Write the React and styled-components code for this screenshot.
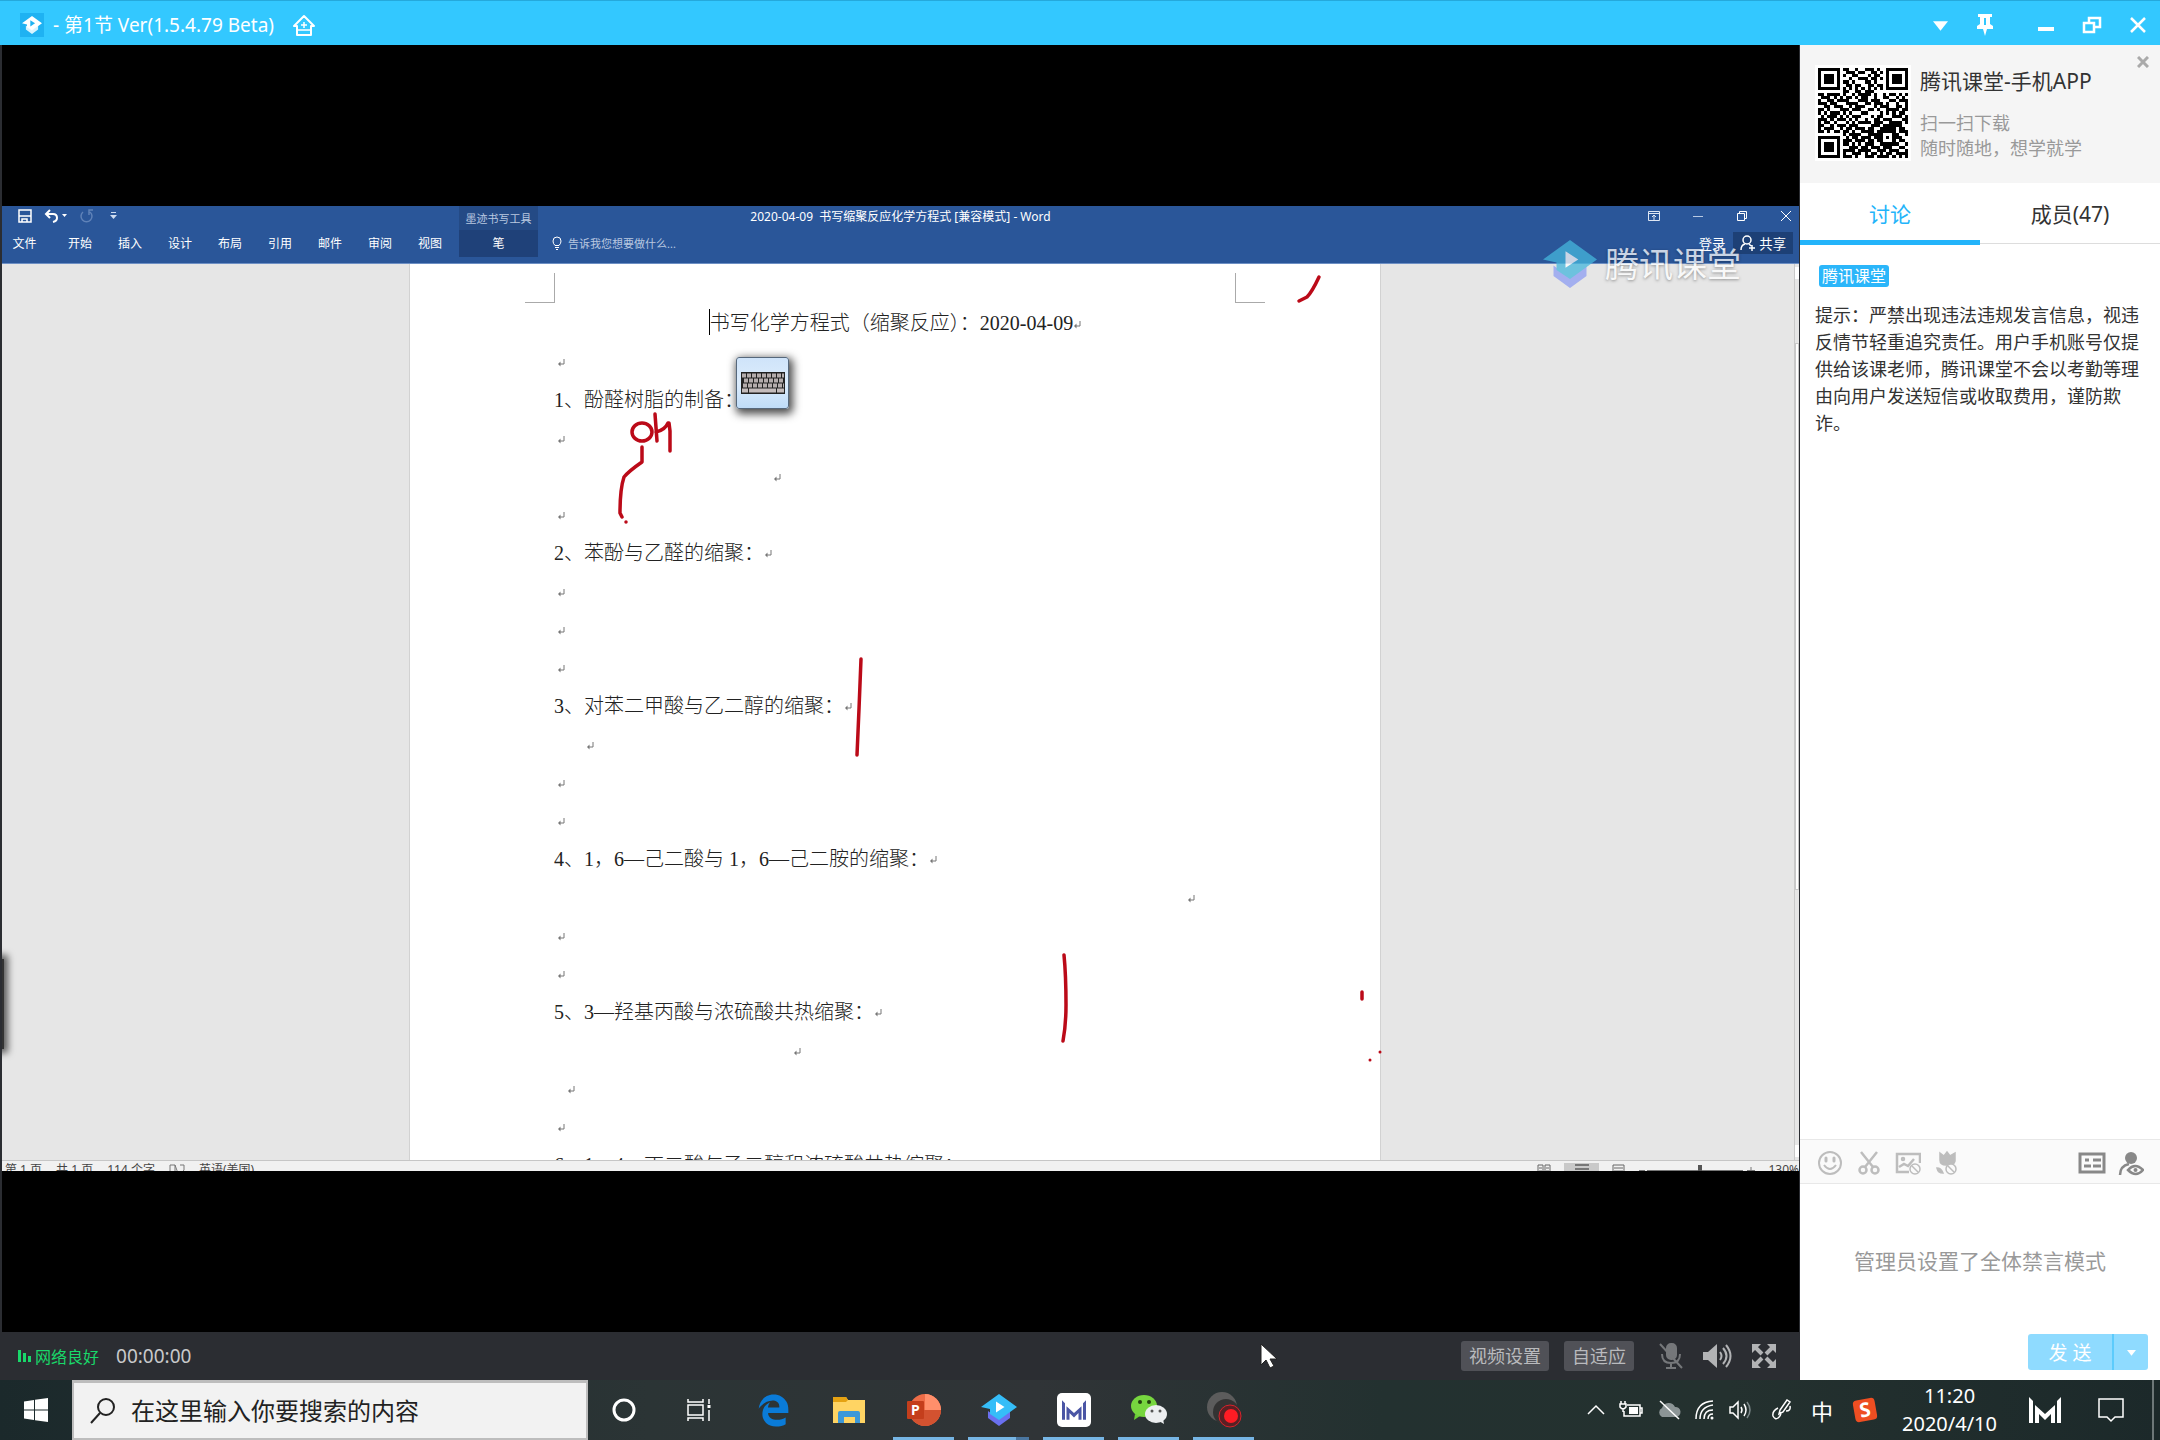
import React from 'react'
import styled, { createGlobalStyle } from 'styled-components';

const GlobalStyle = createGlobalStyle`
    *{
        box-sizing: border-box;
    }
    body{
        margin: 0;
        background: #000;
        font-family: "Noto Sans", "Noto Sans CJK SC", sans-serif;
    }
    button, input{
        font-family: inherit;
        color: inherit;
        border: 0;
        padding: 0;
        margin: 0;
        background: none;
    }
    p, h1, h2{
        margin: 0;
        font-weight: 400;
    }
    svg{
        display: block;
        flex: none;
    }
`;

const menus = ['开始', '插入', '设计', '布局', '引用', '邮件', '审阅', '视图'];

// gap: space between the text (or the margin) and the paragraph mark
const lines = [
    { gap: 3 },
    { text: '1、酚醛树脂的制备：', heading: true, noMark: true },
    { gap: 3 },
    { gap: 219 },
    { gap: 3 },
    { text: '2、苯酚与乙醛的缩聚：', heading: true },
    { gap: 3 },
    { gap: 3 },
    { gap: 3 },
    { text: '3、对苯二甲酸与乙二醇的缩聚：', heading: true },
    { gap: 32 },
    { gap: 3 },
    { gap: 3 },
    { text: '4、1，6—己二酸与 1，6—己二胺的缩聚：', heading: true },
    { gap: 633 },
    { gap: 3 },
    { gap: 3 },
    { text: '5、3—羟基丙酸与浓硫酸共热缩聚：', heading: true },
    { gap: 239 },
    { gap: 13 },
    { gap: 3 },
    { text: '6、1，4—丁二酸与乙二醇和浓硫酸共热缩聚：', heading: true },
];

const qrRows = [
    '11111110110010011101001111111',
    '10000010011101100110101000001',
    '10111010100110001011001011101',
    '10111010001001110110101011101',
    '10111010110100011010001011101',
    '10000010011011001101101000001',
    '11111110101010101010101111111',
    '00000000110011011100000000000',
    '11011110100101111010010110101',
    '01110101011010110010011001010',
    '10011011110001110111000110111',
    '11101100011110011011101001001',
    '00110111001011100010111001101',
    '11010001110111001101001111011',
    '10101110101000110000101010110',
    '01011101010111000101100011101',
    '11101011101010010011011100011',
    '10110100010101111011100111101',
    '11001011101110000111011111100',
    '10111001011011101100111110110',
    '11010110110100111101111110111',
    '00000000101111001111100011001',
    '11111110010110111011101011100',
    '10000010111011101101100010110',
    '10111010110101011100111111001',
    '10111010001110110111011100110',
    '10111010111101111001110111001',
    '10000010100111010110101101111',
    '11111110111010011101111010101',
];

const qrPath = qrRows
    .map((row, y) => [...row].map((c, x) => (c === '1' ? `M${x} ${y}h1v1h-1z` : '')).join(''))
    .join('');

function KeLogo({ size, top, bottom, play = '#fff' }) {
    return (
        <svg width={size} height={size} viewBox="0 0 36 36">
            <path d="M7 19v7l11 8 11-8v-7l-11 8z" fill={bottom} />
            <path d="M18 2 36 15 18 28l-3-2-6-4v-5L0 15z" fill={top} />
            <path d="M15 9.500v11l8.500-5.500z" fill={play} />
        </svg>
    )
}

function MLogo({ size, color }) {
    return (
        <svg width={size} height={size} viewBox="0 0 32 32" fill={color}>
            <path d="M0 3 4 7v22H0zM32 3l-4 4v22h4zM6 11l10 9 10-9v18h-4v-9l-6 6-6-6v9H6z" />
        </svg>
    )
}

function ParaMark() {
    return (
        <MarkStyled width="8" height="10" viewBox="0 0 8 10" fill="none" stroke="#777">
            <path d="M7 1v5H2" />
            <path d="M3.500 3.500 1 6l2.500 2.500z" fill="#777" stroke="none" />
        </MarkStyled>
    )
}

function Caret({ size = 14, color = '#fff' }) {
    return (
        <svg width={size} height={size} viewBox="0 0 14 14"><path d="M0 3h14L7 12z" fill={color} /></svg>
    )
}

function AppTitleBar() {
    return (
        <TitleBarStyled>
            <LogoBox><KeLogo size={20} top="#fff" bottom="#d8f4ff" play="#1fb2f2" /></LogoBox>
            <h1>- 第1节 Ver(1.5.4.79 Beta)</h1>
            <button aria-label="主页">
                <svg width="24" height="24" viewBox="0 0 24 24" fill="none" stroke="#fff" strokeWidth="2">
                    <path d="M12 3 2 13h3v9h14v-9h3z" strokeLinejoin="round" />
                    <path d="M5 17h14M12 9v6M9 12h6" strokeWidth="1.500" />
                </svg>
            </button>
            <WindowButtons>
                <button aria-label="菜单"><Caret size={15} /></button>
                <button aria-label="置顶">
                    <svg width="18" height="24" viewBox="0 0 18 24">
                        <path d="M2 1h14v3h-2v7l3 2v3h-6l-2 7-2-7H1v-3l3-2V4H2z" fill="#fff" />
                        <path d="M8 5h2v7H8z" fill="#33c8ff" />
                    </svg>
                </button>
                <button aria-label="最小化">
                    <svg width="16" height="20" viewBox="0 0 16 20"><path d="M0 12h16v4H0z" fill="#fff" /></svg>
                </button>
                <button aria-label="还原">
                    <svg width="20" height="20" viewBox="0 0 20 20" fill="none" stroke="#fff" strokeWidth="2.500">
                        <path d="M2 8h10v9H2zM7 7V3h11v9h-5" />
                    </svg>
                </button>
                <button aria-label="关闭">
                    <svg width="16" height="16" viewBox="0 0 16 16" stroke="#fff" strokeWidth="2.500"><path d="m1 1 14 14M15 1 1 15" /></svg>
                </button>
            </WindowButtons>
        </TitleBarStyled>
    )
}

function Ribbon() {
    return (
        <RibbonStyled>
            <QuickAccess>
                <button aria-label="保存">
                    <svg width="14" height="14" viewBox="0 0 14 14" fill="none" stroke="#fff" strokeWidth="1.500">
                        <path d="M1 1h12v12H1zM1 7h12M4 13v-3h5v3" />
                    </svg>
                </button>
                <button aria-label="撤消">
                    <svg width="24" height="14" viewBox="0 0 24 14" fill="none" stroke="#fff" strokeWidth="2">
                        <path d="M6 1 2 5l4 4M2 5h7q4 0 4 4 0 3-4 4" />
                        <path d="M18 5h5l-2.500 3z" fill="#fff" stroke="none" />
                    </svg>
                </button>
                <button aria-label="恢复">
                    <svg width="14" height="14" viewBox="0 0 14 14" fill="none" stroke="#5f82b8" strokeWidth="1.500">
                        <path d="M3 3a5.500 5.500 0 1 0 7 0M9 6V1h4" />
                    </svg>
                </button>
                <button aria-label="自定义">
                    <svg width="7" height="9" viewBox="0 0 7 9" fill="#cfdcf0"><path d="M1 1h5v1H1zM0 4h7L3.500 8z" /></svg>
                </button>
            </QuickAccess>
            <DocTitle>2020-04-09&nbsp; 书写缩聚反应化学方程式 [兼容模式] - Word</DocTitle>
            <ContextLabel>墨迹书写工具</ContextLabel>
            <WordButtons>
                <button aria-label="功能区选项">
                    <svg width="14" height="14" viewBox="0 0 14 14" fill="none" stroke="#dfe7f3"><path d="M1.500 2.500h11v9h-11zM2 4.500h10M7 11V6M5 8l2-2 2 2" /></svg>
                </button>
                <button aria-label="最小化 Word">
                    <svg width="14" height="14" viewBox="0 0 14 14" stroke="#b8c9e3"><path d="M2 7.500h10" /></svg>
                </button>
                <button aria-label="还原 Word">
                    <svg width="14" height="14" viewBox="0 0 14 14" fill="none" stroke="#fff"><path d="M2.500 4.500h7v7h-7zM4.500 4V2.500h7v7H10" /></svg>
                </button>
                <button aria-label="关闭 Word">
                    <svg width="14" height="14" viewBox="0 0 14 14" stroke="#fff"><path d="m2 2 10 10M12 2 2 12" /></svg>
                </button>
            </WordButtons>
            <Menus>
                <MenuButton $file>文件</MenuButton>
                {menus.map((m) => <MenuButton key={m}>{m}</MenuButton>)}
            </Menus>
            <ContextTab>笔</ContextTab>
            <TellMe>
                <svg width="10" height="14" viewBox="0 0 10 14" fill="none" stroke="#fff">
                    <path d="M3 9.500Q1 7.500 1 5a4 4 0 0 1 8 0q0 2.500-2 4.500zM3 11.500h4M4 13.500h2" />
                </svg>
                告诉我您想要做什么...
            </TellMe>
            <Account>
                <button>登录</button>
                <ShareButton>
                    <svg width="16" height="16" viewBox="0 0 16 16" fill="none" stroke="#fff" strokeWidth="1.500">
                        <circle cx="7" cy="5" r="4" />
                        <path d="M1 15q0-5 4-6M9 9l2 2M9 13h6M12 10v6" />
                    </svg>
                    共享
                </ShareButton>
            </Account>
        </RibbonStyled>
    )
}

function Keyboard() {
    return (
        <KeyboardStyled aria-label="屏幕键盘">
            <svg width="44" height="22" viewBox="0 0 44 22">
                <rect width="44" height="22" fill="#222" />
                <path
                    d="M1 3.500h42M3 8.500h40M2 13.500h41"
                    stroke="#b5adad"
                    strokeWidth="4"
                    strokeDasharray="4 1"
                />
                <path d="M1 18.500h6M8 18.500h27M36 18.500h7" stroke="#c4bcbc" strokeWidth="4" />
            </svg>
        </KeyboardStyled>
    )
}

function Ink() {
    return (
        <InkStyled width="972" height="896" viewBox="0 0 972 896">
            <ellipse cx="232" cy="168" rx="10" ry="9" />
            <path d="M245 150 247 177M246 168q9-2 12-9l1 0 1 8v20" />
            <path d="M232 183v15q-13 9-18 15-4 12-4 36l2 4M216 258v0" />
            <path d="m451 395-2 50-2 46" />
            <path d="M909 13q-7 15-12 20l-8 4" strokeLinejoin="round" />
            <path d="M654 691q2 20 2 50 0 20-3 36M952 728v7" />
            <path d="M960 796v0M970 788v0" strokeWidth="3" />
        </InkStyled>
    )
}

function WordWindow() {
    return (
        <WordStyled>
            <Ribbon />
            <DocArea>
                <Page>
                    <Corners><span /><span /></Corners>
                    <PageBody>
                        <DocLine $center>
                            <TextCursor />
                            <h2>书写化学方程式（缩聚反应）：2020-04-09</h2>
                            <ParaMark />
                        </DocLine>
                        {lines.map((l, i) => (
                            <DocLine key={i} $heading={l.heading} $gap={l.gap}>
                                {l.text && <p>{l.text}</p>}
                                {!l.noMark && <ParaMark />}
                            </DocLine>
                        ))}
                    </PageBody>
                    <Keyboard />
                    <Ink />
                </Page>
                <ScrollTrack><i /><b /><i /></ScrollTrack>
            </DocArea>
            <StatusBar>
                <span>第 1 页</span>
                <span>共 1 页</span>
                <span>114 个字</span>
                <svg width="16" height="14" viewBox="0 0 16 14" fill="none" stroke="#777"><path d="M1 2h5v11H1zM6 2l4 11M11 2h4v5l-4 5" /></svg>
                <span>英语(美国)</span>
                <ViewTools>
                    <svg width="14" height="14" viewBox="0 0 14 14" fill="none" stroke="#666"><path d="M1 2h5v11H1zM8 2h5v11H8zM2 5h3M2 8h3M9 5h3M9 8h3" /></svg>
                    <ViewActive>
                        <svg width="16" height="14" viewBox="0 0 16 14" stroke="#777" strokeWidth="2"><path d="M1 2h14M1 6h14M1 10h14" /></svg>
                    </ViewActive>
                    <svg width="14" height="14" viewBox="0 0 14 14" fill="none" stroke="#666"><path d="M1 2h11v11H1zM2 5h9M2 8h9" /></svg>
                    <svg width="116" height="14" viewBox="0 0 116 14" stroke="#777"><path d="M0 7.500h6M8 7.500h96M108 7.500h8M112 4v8" /><path d="M61 2v12" stroke="#555" strokeWidth="4" /></svg>
                    <span>130%</span>
                </ViewTools>
            </StatusBar>
            <EdgeHandle />
            <Watermark><KeLogo size={54} top="#45b6dc" bottom="#8d9df2" />腾讯课堂</Watermark>
        </WordStyled>
    )
}

function PlayerBar() {
    return (
        <PlayerBarStyled>
            <Network>
                <svg width="14" height="14" viewBox="0 0 14 14" fill="#19d86a"><path d="M0 1h3v12H0zM5 4h3v9H5zM10 7h3v6h-3z" /></svg>
                网络良好
            </Network>
            <time>00:00:00</time>
            <PlayerTools>
                <GreyButton>视频设置</GreyButton>
                <GreyButton>自适应</GreyButton>
                <button aria-label="麦克风">
                    <svg width="26" height="28" viewBox="0 0 26 28" fill="none" stroke="#75777a" strokeWidth="2">
                        <rect x="9" y="2" width="9" height="15" rx="4" fill="#75777a" />
                        <path d="M4 12q0 9 9 9t9-9M13 21v5M8 26h10M2 2l22 24" />
                    </svg>
                </button>
                <button aria-label="音量">
                    <svg width="30" height="26" viewBox="0 0 30 26" fill="none" stroke="#b2b3b5" strokeWidth="2">
                        <path d="M1 9h5l9-8v24l-9-8H1z" fill="#b2b3b5" stroke="none" />
                        <path d="M18 9q3 4 0 8M21 5q7 8 0 16M24 2q9 11 0 22" />
                    </svg>
                </button>
                <button aria-label="全屏">
                    <svg width="24" height="24" viewBox="0 0 24 24" fill="#b2b3b5" stroke="#b2b3b5" strokeWidth="4">
                        <path d="m3 3 7 7M21 3l-7 7M3 21l7-7M21 21l-7-7" />
                        <path d="M0 0h9L0 9zM24 0v9l-9-9zM0 24v-9l9 9zM24 24h-9l9-9z" stroke="none" />
                    </svg>
                </button>
            </PlayerTools>
        </PlayerBarStyled>
    )
}

function SidePanel() {
    return (
        <SidePanelStyled>
            <Promo>
                <QrBox>
                    <svg width="100%" viewBox="0 0 29 29" shapeRendering="crispEdges"><path d={qrPath} fill="#000" /></svg>
                </QrBox>
                <div>
                    <h2>腾讯课堂-手机APP</h2>
                    <p>扫一扫下载</p>
                    <p>随时随地，想学就学</p>
                </div>
                <PromoClose aria-label="关闭推广">
                    <svg width="12" height="12" viewBox="0 0 12 12" stroke="#aaa" strokeWidth="3"><path d="m1 1 10 10M11 1 1 11" /></svg>
                </PromoClose>
            </Promo>
            <Tabs>
                <TabButton $active>讨论</TabButton>
                <TabButton>成员(47)</TabButton>
            </Tabs>
            <Chat>
                <Badge>腾讯课堂</Badge>
                <p>提示：严禁出现违法违规发言信息，视违反情节轻重追究责任。用户手机账号仅提供给该课老师，腾讯课堂不会以考勤等理由向用户发送短信或收取费用，谨防欺诈。</p>
            </Chat>
            <ChatTools>
                <button aria-label="表情">
                    <svg width="26" height="26" viewBox="0 0 26 26" fill="none" stroke="#bdbdbd" strokeWidth="2">
                        <circle cx="13" cy="13" r="11" />
                        <path d="M7 15q6 8 12 0" />
                        <path d="M9 8v3M17 8v3" strokeWidth="3" strokeLinecap="round" />
                    </svg>
                </button>
                <button aria-label="截图">
                    <svg width="26" height="26" viewBox="0 0 26 26" fill="none" stroke="#bdbdbd" strokeWidth="2.500">
                        <circle cx="7" cy="20" r="3.500" />
                        <circle cx="19" cy="20" r="3.500" />
                        <path d="M5 2 17 17M21 2 9 17" />
                    </svg>
                </button>
                <button aria-label="图片">
                    <svg width="26" height="26" viewBox="0 0 26 26" fill="none" stroke="#bdbdbd" strokeWidth="2.500">
                        <path d="M14 22H2V4h23v9M4 17l5-3 4 2 6-7" />
                        <circle cx="8" cy="9" r="1" />
                        <circle cx="20" cy="19" r="5" strokeWidth="1.500" />
                        <path d="m17 16 6 6" strokeWidth="1.500" />
                    </svg>
                </button>
                <button aria-label="鲜花">
                    <svg width="26" height="26" viewBox="0 0 26 26" fill="none" stroke="#bdbdbd" strokeWidth="1.500">
                        <path d="m6 3 4 3 3-4 3 4 5-3v8q-1 4-6 4h-3q-6 0-6-5zM3 18q4 0 6 5-5 0-6-5z" fill="#bdbdbd" />
                        <circle cx="17" cy="19" r="5" fill="#fafafa" />
                        <path d="m14 16 6 6" />
                    </svg>
                </button>
                <ToolsRight>
                    <button aria-label="名片">
                        <svg width="28" height="22" viewBox="0 0 28 22" fill="none" stroke="#888" strokeWidth="3">
                            <path d="M2 2h24v18H2z" />
                            <path d="M7 8h4M6 14h7M15 8h8M15 14h8" />
                        </svg>
                    </button>
                    <button aria-label="只看老师">
                        <svg width="26" height="26" viewBox="0 0 26 26" fill="none" stroke="#888" strokeWidth="2.500">
                            <circle cx="13" cy="8" r="6" fill="#888" stroke="none" />
                            <path d="M2 25q0-9 9-11" />
                            <path d="M10 20q7-8 15 0-7 8-15 0z" />
                            <circle cx="17.500" cy="20" r="2" fill="#888" stroke="none" />
                        </svg>
                    </button>
                </ToolsRight>
            </ChatTools>
            <Composer>
                <p>管理员设置了全体禁言模式</p>
                <SendGroup>
                    <button>发 送</button>
                    <button aria-label="发送选项"><Caret size={9} /></button>
                </SendGroup>
            </Composer>
        </SidePanelStyled>
    )
}

function Taskbar() {
    return (
        <TaskbarStyled>
            <StartButton aria-label="开始菜单">
                <svg width="24" height="24" viewBox="0 0 24 24" fill="#fff"><path d="M0 3.500 10 2v9.500H0zM11 1.800 24 0v11.500H11zM0 12.500h10V22L0 20.500zM11 12.500h13V24l-13-1.800z" /></svg>
            </StartButton>
            <SearchBox>
                <svg width="26" height="26" viewBox="0 0 26 26" fill="none" stroke="#222" strokeWidth="2"><circle cx="16" cy="9" r="8" /><path d="M10 15 1 25" /></svg>
                <input aria-label="搜索" placeholder="在这里输入你要搜索的内容" />
            </SearchBox>
            <TaskButton aria-label="Cortana">
                <svg width="24" height="24" viewBox="0 0 24 24"><circle cx="12" cy="12" r="10" fill="none" stroke="#fff" strokeWidth="3" /></svg>
            </TaskButton>
            <TaskButton aria-label="任务视图">
                <svg width="24" height="24" viewBox="0 0 24 24" fill="none" stroke="#fff" strokeWidth="1.500">
                    <path d="M1 7h15v10H1zM1 1v3h15V1M1 23v-3h15v3M22 1v5M22 12v11" />
                    <path d="M20.500 7h3v3h-3z" fill="#fff" stroke="none" />
                </svg>
            </TaskButton>
            <TaskButton aria-label="Edge">
                <svg width="33" height="33" viewBox="0 0 512 512" fill="#0a7bd8">
                    <path d="M486.290 243.670c0-44-7.760-84.460-28.810-122.400C416.500 47.880 343.910 8 258.890 8 119 7.720 40.620 113.210 26.060 227.680c42.420-61.310 117.070-121.380 220.370-125 0 0 109.670 0 99.420 105H170c6.370-37.390 18.550-59 34.340-78.930-75.050 34.900-121.850 96.100-120.750 188.320.830 71.450 50.130 144.840 120.750 172 83.350 31.840 192.770 7.200 240.130-21.330V363.310C363.600 419.800 173.600 424.230 172.210 295.740H486.500z" />
                </svg>
            </TaskButton>
            <TaskButton aria-label="文件资源管理器">
                <svg width="32" height="28" viewBox="0 0 32 28">
                    <path d="M0 1h13l2 3h17v23H0z" fill="#ffd463" />
                    <path d="M0 1h13l2 3-2 2H0z" fill="#e5a212" />
                    <path d="M5 27V17q0-2 2-2h18q2 0 2 2v10h-5v-6H11v6z" fill="#3d98d8" />
                </svg>
            </TaskButton>
            <TaskButton aria-label="PowerPoint" $open>
                <svg width="34" height="34" viewBox="0 0 34 34">
                    <circle cx="18" cy="17" r="16" fill="#ed6c47" />
                    <path d="M18 1a16 16 0 0 1 16 16H18z" fill="#ff8f6b" />
                    <path d="M2 17h32a16 16 0 0 1-32 0z" fill="#d35230" />
                    <rect y="8" width="17" height="18" rx="1" fill="#c43e1c" />
                    <text x="4" y="22" fontSize="14" fontWeight="700" fill="#fff">P</text>
                </svg>
            </TaskButton>
            <TaskButton aria-label="腾讯课堂" $open $stacked><KeLogo size={36} top="#35bdf8" bottom="#6a70f0" /></TaskButton>
            <TaskButton aria-label="MindMaster" $open><WhiteTile><MLogo size={24} color="#4a55a5" /></WhiteTile></TaskButton>
            <TaskButton aria-label="微信" $open>
                <svg width="38" height="32" viewBox="0 0 38 32">
                    <path d="M5 20 4 26l6-4z" fill="#6bcf35" />
                    <ellipse cx="14" cy="12" rx="13" ry="11" fill="#77d63f" />
                    <circle cx="10" cy="8" r="2" fill="#23400f" />
                    <circle cx="19" cy="8" r="2" fill="#23400f" />
                    <ellipse cx="26" cy="20" rx="11" ry="9" fill="#eceef0" />
                    <path d="m29 27 5 3-1-5z" fill="#eceef0" />
                    <circle cx="22" cy="17" r="1.500" fill="#555" />
                    <circle cx="30" cy="17" r="1.500" fill="#555" />
                </svg>
            </TaskButton>
            <TaskButton aria-label="录屏" $open>
                <svg width="38" height="38" viewBox="0 0 38 38">
                    <circle cx="17" cy="16" r="15" fill="#5c5c5c" />
                    <circle cx="21" cy="21" r="13" fill="#333" />
                    <circle cx="25" cy="25" r="11" fill="#5a2024" stroke="#d8232b" />
                    <circle cx="26" cy="25" r="7" fill="#ff1c24" />
                </svg>
            </TaskButton>
            <Tray>
                <button aria-label="显示隐藏的图标">
                    <svg width="18" height="18" viewBox="0 0 18 18" fill="none" stroke="#fff" strokeWidth="1.500"><path d="m1 13 8-8 8 8" /></svg>
                </button>
                <button aria-label="电池">
                    <svg width="24" height="20" viewBox="0 0 24 20" fill="none" stroke="#fff" strokeWidth="1.500">
                        <path d="M8 5h13v11H5v-5M21 8h2v5h-2M2 1v3M6 1v3M1 4h6v3q-3 4-6 0zM4 8v4" />
                        <path d="M10 7h9v7h-9z" fill="#fff" stroke="none" />
                    </svg>
                </button>
                <button aria-label="OneDrive">
                    <svg width="24" height="20" viewBox="0 0 24 20">
                        <path d="M5 17a5 5 0 0 1 0-9 7 7 0 0 1 13-1 5 5 0 0 1 1 10z" fill="#8c9596" />
                        <path d="m3 1 19 18" stroke="#fff" strokeWidth="1.500" />
                    </svg>
                </button>
                <button aria-label="网络">
                    <svg width="20" height="20" viewBox="0 0 20 20" fill="none" stroke="#fff" strokeWidth="1.500">
                        <path d="M1 19Q1 2 18 1M5 19Q5 7 18 5M9 19q0-9 9-9M13 19q0-5 5-5" />
                        <circle cx="17" cy="18" r="1.500" fill="#fff" stroke="none" />
                    </svg>
                </button>
                <button aria-label="扬声器">
                    <svg width="22" height="20" viewBox="0 0 22 20" fill="none" stroke="#fff" strokeWidth="1.500">
                        <path d="M1 7h3l5-5v16l-5-5H1zM12 7q2 3 0 6M15 4q4 6 0 12" />
                        <path d="M18 2q6 8 0 16" stroke="#7b8788" />
                    </svg>
                </button>
                <button aria-label="笔工作区">
                    <svg width="20" height="22" viewBox="0 0 20 22" fill="none" stroke="#fff" strokeWidth="1.500">
                        <path d="m7 15 1-4 7-10 3 2-7 10zM6 9q-6 3-5 8 2 4 5 2t3-6M14 12q5 0 4-5" />
                    </svg>
                </button>
                <ImeButton>中</ImeButton>
                <SogouButton><span>S</span></SogouButton>
            </Tray>
            <Clock><time>11:20</time><time>2020/4/10</time></Clock>
            <button aria-label="MindMaster 托盘"><MLogo size={32} color="#fff" /></button>
            <Notify aria-label="通知">
                <svg width="26" height="26" viewBox="0 0 26 26" fill="none" stroke="#fff" strokeWidth="1.500"><path d="M1 2h24v18h-8l-4 4-4-4H1z" /></svg>
            </Notify>
            <ShowDesktop aria-label="显示桌面" />
        </TaskbarStyled>
    )
}

function App() {
    return (
        <AppStyled>
            <GlobalStyle />
            <AppTitleBar />
            <Content>
                <Player>
                    <Video><WordWindow /></Video>
                    <PlayerBar />
                    <Pointer width="18" height="26" viewBox="0 0 18 26">
                        <path d="M1 1v21l5-5 4 8 4-2-4-7h7z" fill="#fff" stroke="#222" />
                    </Pointer>
                </Player>
                <SidePanel />
            </Content>
            <Taskbar />
        </AppStyled>
    )
}

const AppStyled = styled.div`
    display: flex;
    flex-direction: column;
    height: 100vh;
    overflow: hidden;
`;

const TitleBarStyled = styled.header`
    display: flex;
    align-items: center;
    height: 45px;
    flex: none;
    padding: 4px 14px 0 20px;
    background: #33c8ff;
    border-top: 1px solid #25a9dc;
    color: #fff;
    h1{
        font-size: 19px;
        line-height: 24px;
        margin: 0 18px 0 9px;
    }
`;

const LogoBox = styled.span`
    display: flex;
    align-items: center;
    justify-content: center;
    width: 24px;
    height: 24px;
    background: #1fb2f2;
`;

const WindowButtons = styled.div`
    display: flex;
    align-items: center;
    gap: 28px;
    margin-left: auto;
    button:nth-child(3){
        margin-left: 16px;
    }
`;

const Content = styled.div`
    display: flex;
    flex: 1;
    min-height: 0;
`;

const Player = styled.main`
    position: relative;
    display: flex;
    flex-direction: column;
    flex: 1;
    min-width: 0;
    background: #2b2d32;
`;

const Video = styled.section`
    display: flex;
    flex-direction: column;
    justify-content: center;
    flex: 1;
    min-height: 0;
    margin: 0 1px 0 2px;
    background: #000;
`;

const WordStyled = styled.div`
    position: relative;
    display: flex;
    flex-direction: column;
    height: 75%;
    overflow: hidden;
    background: #e6e6e6;
`;

const RibbonStyled = styled.div`
    display: grid;
    grid-template-columns: auto 79px 1fr auto;
    grid-template-rows: 24px 27px;
    flex: none;
    padding-bottom: 6px;
    background: #2a5699;
    border-bottom: 1px solid #6d8fc4;
    color: #fff;
    font-size: 11px;
`;

const QuickAccess = styled.div`
    grid-area: 1 / 1;
    display: flex;
    align-items: center;
    gap: 12px;
    padding: 0 0 4px 16px;
    button:last-child{
        margin-left: 4px;
    }
`;

const DocTitle = styled.p`
    grid-area: 1 / 1 / 2 / 5;
    text-align: center;
    line-height: 22px;
    font-size: 12px;
`;

const ContextLabel = styled.span`
    grid-area: 1 / 2;
    display: flex;
    align-items: center;
    justify-content: center;
    background: #244a85;
    color: #b9c8e0;
`;

const WordButtons = styled.div`
    grid-area: 1 / 4;
    display: flex;
    align-items: center;
    gap: 30px;
    padding: 0 6px 4px 0;
`;

const Menus = styled.nav`
    grid-area: 2 / 1;
    display: flex;
    align-items: center;
    padding-right: 4px;
`;

const MenuButton = styled.button`
    width: ${({ $file }) => ($file ? 45 : 50)}px;
    margin-right: ${({ $file }) => ($file ? 8 : 0)}px;
    font-size: 12px;
    line-height: 27px;
`;

const ContextTab = styled.button`
    grid-area: 2 / 2;
    background: #1f4179;
    font-size: 12px;
`;

const TellMe = styled.button`
    grid-area: 2 / 3;
    display: flex;
    align-items: center;
    gap: 6px;
    padding-left: 14px;
    color: #b9c8e0;
    font-size: 11px;
`;

const Account = styled.div`
    grid-area: 2 / 4;
    display: flex;
    align-items: center;
    justify-content: flex-end;
    gap: 8px;
    padding-right: 6px;
    font-size: 12px;
`;

const ShareButton = styled.button`
    display: flex;
    align-items: center;
    gap: 3px;
    height: 22px;
    padding: 0 7px;
    background: #1d4076;
`;

const DocArea = styled.div`
    position: relative;
    display: flex;
    flex: 1;
    min-height: 0;
    overflow: hidden;
`;

const Page = styled.article`
    position: relative;
    width: 972px;
    margin: 0 auto;
    background: #fff;
    border: solid #d2d2d2;
    border-width: 0 1px;
`;

const Corners = styled.div`
    display: flex;
    justify-content: space-between;
    padding: 9px 115px;
    height: 39px;
    span{
        width: 30px;
        height: 30px;
        border: solid #aaa;
        border-width: 0 1px 1px 0;
    }
    span:last-child{
        border-width: 0 0 1px 1px;
    }
`;

const PageBody = styled.div`
    padding: 0 144px;
    font-family: "Liberation Serif", "Noto Sans CJK SC", serif;
    color: #222;
    h2, p{
        font-size: 20px;
        font-weight: 300;
    }
`;

const DocLine = styled.div`
    display: flex;
    align-items: center;
    justify-content: ${({ $center }) => ($center ? 'center' : 'flex-start')};
    height: ${({ $heading }) => ($heading ? 39 : 38)}px;
    padding-left: ${({ $gap }) => $gap || 0}px;
    white-space: nowrap;
`;

const MarkStyled = styled.svg`
    margin-top: 6px;
`;

const TextCursor = styled.i`
    width: 1px;
    height: 26px;
    background: #000;
`;

const KeyboardStyled = styled.button`
    position: absolute;
    left: 326px;
    top: 93px;
    width: 53px;
    height: 52px;
    display: flex;
    align-items: center;
    justify-content: center;
    border: 1px solid #56687c;
    border-radius: 3px;
    background: linear-gradient(#cfe4fa, #dcecfc 50%, #bfdcf8);
    box-shadow: 2px 3px 8px 2px rgba(0, 0, 0, 0.7);
`;

const InkStyled = styled.svg`
    position: absolute;
    left: 0;
    top: 0;
    fill: none;
    stroke: #bb0a18;
    stroke-width: 3.5;
    stroke-linecap: round;
    stroke-linejoin: round;
`;

const ScrollTrack = styled.div`
    display: flex;
    flex-direction: column;
    width: 5px;
    margin-left: 6px;
    border-left: 1px solid #c8c8c8;
    i{
        height: 12px;
        margin: 3px 0;
        background: #fff;
    }
    b{
        height: 61%;
        margin: 61px 0 auto;
        background: #fff;
        border: 1px solid #c8c8c8;
    }
`;

const StatusBar = styled.footer`
    display: flex;
    align-items: flex-start;
    gap: 14px;
    flex: none;
    height: 11px;
    padding: 2px 0 0 3px;
    overflow: hidden;
    background: #f1f1f1;
    border-top: 1px solid #c6c6c6;
    color: #444;
    font-size: 12px;
    line-height: 14px;
    white-space: nowrap;
`;

const ViewTools = styled.div`
    display: flex;
    gap: 13px;
    margin-left: auto;
`;

const ViewActive = styled.span`
    display: flex;
    justify-content: center;
    width: 35px;
    background: #c9c9c9;
`;

const EdgeHandle = styled.i`
    position: absolute;
    left: -8px;
    top: 78%;
    width: 10px;
    height: 90px;
    background: #333;
    box-shadow: 0 0 7px 4px rgba(0, 0, 0, 0.6);
`;

const Watermark = styled.div`
    position: absolute;
    right: 58px;
    top: 30px;
    display: flex;
    align-items: center;
    gap: 8px;
    color: #fff;
    font-size: 34px;
    line-height: 56px;
    text-shadow: 0 1px 3px rgba(0, 0, 0, 0.5);
    opacity: 0.75;
`;

const PlayerBarStyled = styled.div`
    display: flex;
    align-items: center;
    height: 48px;
    flex: none;
    padding: 0 24px 0 18px;
    color: #c8c9cb;
    font-size: 19px;
`;

const Network = styled.span`
    display: flex;
    align-items: center;
    gap: 3px;
    margin-right: 17px;
    color: #19d86a;
    font-size: 16px;
`;

const PlayerTools = styled.div`
    display: flex;
    align-items: center;
    gap: 15px;
    margin-left: auto;
    button:nth-child(3){
        margin: 0 3px 0 9px;
    }
    button:last-child{
        margin-left: 5px;
    }
`;

const GreyButton = styled.button`
    height: 30px;
    padding: 0 8px;
    border-radius: 3px;
    background: #505157;
    color: #b9babd;
    font-size: 18px;
    line-height: 30px;
`;

const Pointer = styled.svg`
    position: absolute;
    left: 70%;
    bottom: 11px;
`;

const SidePanelStyled = styled.aside`
    display: flex;
    flex-direction: column;
    width: 360px;
    flex: none;
    background: #fff;
`;

const Promo = styled.div`
    position: relative;
    display: flex;
    gap: 9px;
    padding: 20px 15px 22px;
    background: #f5f5f5;
    color: #999;
    font-size: 18px;
    line-height: 25px;
    h2{
        margin: 2px 0 16px;
        color: #333;
        font-size: 21px;
        line-height: 28px;
    }
`;

const QrBox = styled.div`
    width: 96px;
    height: 96px;
    padding: 3px;
    background: #fff;
`;

const PromoClose = styled.button`
    position: absolute;
    right: 11px;
    top: 11px;
`;

const Tabs = styled.div`
    display: flex;
    height: 62px;
`;

const TabButton = styled.button`
    flex: 1;
    margin-bottom: ${({ $active }) => ($active ? 0 : 1)}px;
    border-bottom: ${({ $active }) => ($active ? '5px solid #23b4fa' : '1px solid #ddd')};
    padding-top: ${({ $active }) => ($active ? 3 : 0)}px;
    color: ${({ $active }) => ($active ? '#23b4fa' : '#333')};
    font-size: 21px;
`;

const Chat = styled.div`
    flex: 1;
    padding: 20px 19px 0 15px;
    color: #333;
    font-size: 18px;
    line-height: 27px;
    p{
        margin-top: 15px;
    }
`;

const Badge = styled.span`
    display: block;
    width: fit-content;
    margin-left: 4px;
    padding: 0 3px;
    border-radius: 3px;
    background: #2bb6fa;
    color: #fff;
    font-size: 16px;
    line-height: 22px;
`;

const ChatTools = styled.div`
    display: flex;
    align-items: center;
    gap: 13px;
    height: 45px;
    padding: 2px 16px 0 17px;
    background: #fafafa;
    border: solid #e8e8e8;
    border-width: 1px 0;
`;

const ToolsRight = styled.div`
    display: flex;
    align-items: center;
    gap: 12px;
    margin-left: auto;
`;

const Composer = styled.div`
    display: flex;
    flex-direction: column;
    justify-content: space-between;
    height: 196px;
    padding: 62px 12px 10px;
    p{
        color: #999;
        font-size: 21px;
        line-height: 30px;
        text-align: center;
    }
`;

const SendGroup = styled.div`
    display: flex;
    align-self: flex-end;
    width: 120px;
    height: 36px;
    border-radius: 3px;
    background: #8fdbff;
    color: #fff;
    button{
        display: flex;
        align-items: center;
        justify-content: center;
        flex: 1;
        font-size: 19px;
    }
    button:first-child{
        flex: none;
        width: 86px;
        border-right: 2px solid #5ccbfc;
    }
`;

const TaskbarStyled = styled.footer`
    display: flex;
    align-items: center;
    height: 60px;
    flex: none;
    background: linear-gradient(90deg, #1b292b, #2b3435 30%, #303437 48%, #233130 64%, #24312f 80%, #1c292a);
    color: #fff;
`;

const StartButton = styled.button`
    display: flex;
    justify-content: center;
    width: 72px;
`;

const SearchBox = styled.label`
    display: flex;
    align-items: center;
    gap: 15px;
    width: 516px;
    height: 60px;
    margin-right: -2px;
    padding-left: 16px;
    background: #f2f2f2;
    border: 2px solid #bdbdbd;
    border-top-width: 3px;
    input{
        flex: 1;
        min-width: 0;
        font-size: 24px;
        outline: 0;
    }
    input::placeholder{
        color: #222;
        opacity: 1;
    }
`;

const TaskButton = styled.button`
    display: flex;
    align-items: center;
    justify-content: center;
    width: 75px;
    height: 60px;
    background: ${({ $open, $stacked }) => {
        if (!$open) return 'none';
        return $stacked
            ? 'linear-gradient(90deg, #76b5e4 78%, #4a76a0 78%) center bottom / 61px 3px no-repeat'
            : 'linear-gradient(#76b5e4, #76b5e4) center bottom / 61px 3px no-repeat';
    }};
`;

const WhiteTile = styled.span`
    display: flex;
    align-items: center;
    justify-content: center;
    width: 34px;
    height: 34px;
    border-radius: 5px;
    background: #fff;
`;

const Tray = styled.div`
    display: flex;
    align-items: center;
    gap: 14px;
    margin: 0 26px 0 auto;
    button:nth-child(6){
        margin-left: 7px;
    }
`;

const ImeButton = styled.button`
    margin-left: 5px;
    font-size: 22px;
`;

const SogouButton = styled.button`
    margin-left: 7px;
    span{
        display: block;
        width: 22px;
        height: 22px;
        border-radius: 4px;
        background: #ee4e22;
        font-size: 20px;
        font-weight: 700;
        line-height: 22px;
        transform: rotate(-10deg);
    }
`;

const Clock = styled.div`
    display: flex;
    flex-direction: column;
    align-items: center;
    margin-right: 32px;
    font-size: 20px;
    line-height: 28px;
`;

const Notify = styled.button`
    margin: 0 28px 0 37px;
`;

const ShowDesktop = styled.button`
    width: 8px;
    height: 60px;
    border-left: 2px solid #6d7778;
`;

export default App;
